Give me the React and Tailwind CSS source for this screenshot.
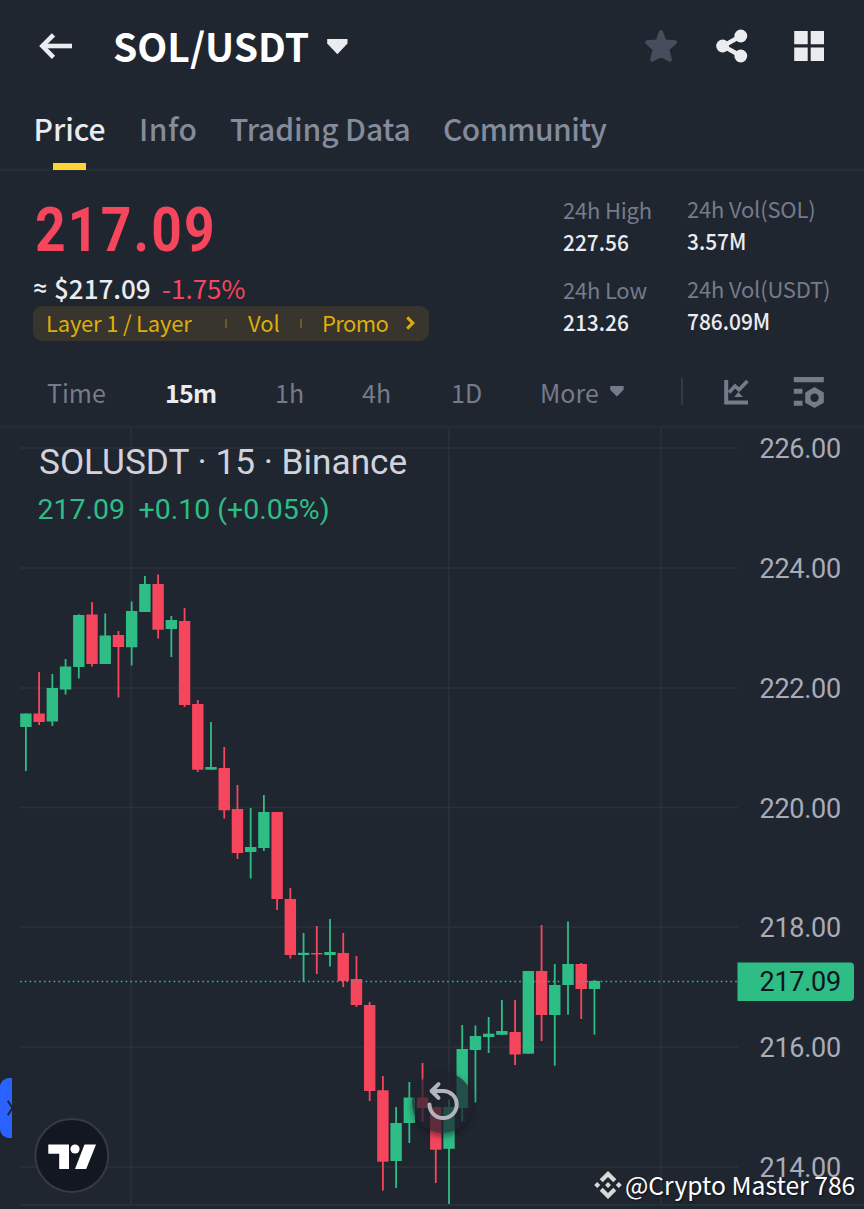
import React from "react";

const UP = "#2ebd85";
const DOWN = "#f6465d";

// [direction, wick top, body top, body bottom, wick bottom]
const candles = [
  ["u", 713.5, 713.5, 727, 771],
  ["d", 672, 713.5, 722, 725],
  ["u", 674, 688, 721.5, 726],
  ["u", 659, 666.5, 689.5, 694.5],
  ["u", 614.3, 615, 667, 678.5],
  ["d", 602, 614.5, 664, 666.5],
  ["u", 613.5, 635.5, 664, 664],
  ["d", 631, 635, 647, 697.5],
  ["u", 601.5, 611, 647.3, 665.5],
  ["u", 576, 584, 612, 612],
  ["d", 574.5, 584, 629.7, 638.5],
  ["u", 616, 620, 629, 657],
  ["d", 608, 621, 705, 707],
  ["d", 700, 704, 769.7, 772],
  ["u", 722, 767, 769.7, 769.7],
  ["d", 747, 768, 810.3, 818.5],
  ["d", 785, 809, 853, 859],
  ["u", 808, 847, 852, 878.5],
  ["u", 795, 812, 848, 851],
  ["d", 812, 812, 899, 910],
  ["d", 888, 899, 955, 958.5],
  ["u", 933, 952.8, 955, 982],
  ["d", 926, 953, 954.4, 974],
  ["u", 919, 952, 955, 966.5],
  ["d", 933, 953, 981, 987],
  ["d", 956, 979, 1005, 1007],
  ["d", 1002, 1005, 1091, 1101],
  ["d", 1076, 1090.3, 1161.7, 1190.5],
  ["u", 1107, 1123, 1161, 1188],
  ["u", 1082, 1097.5, 1123, 1143],
  ["d", 1063, 1097.5, 1108, 1121.5],
  ["d", 1107, 1107, 1149.7, 1183],
  ["u", 1099.5, 1107, 1148.8, 1204],
  ["u", 1025, 1049, 1108, 1121.5],
  ["u", 1025.5, 1036, 1050, 1102.5],
  ["u", 1017, 1033.7, 1037, 1053],
  ["u", 1000, 1031, 1034.8, 1034.8],
  ["d", 1000, 1032, 1054.5, 1065],
  ["u", 971, 971, 1053.7, 1053.7],
  ["d", 925, 971, 1015, 1041],
  ["u", 964, 985, 1015, 1065.7],
  ["u", 921.5, 964, 985, 1014.7],
  ["d", 963, 964, 989, 1019],
  ["u", 980, 981, 989, 1034.7],
];

const levels = [
  ["226.00", 448],
  ["224.00", 568],
  ["222.00", 688],
  ["220.00", 807.5],
  ["218.00", 927],
  ["216.00", 1047],
  ["214.00", 1167],
];

function Header() {
  return (
    <header className="flex h-[95px] items-center pb-[3px] pl-[39px] pr-[39px] text-[#eaecef]">
      <svg className="h-[28px] w-[34px] shrink-0" viewBox="0 0 34 28" fill="none" stroke="currentColor" strokeWidth="4.6">
        <path d="M33 14H4" />
        <path d="M14.5 2.8L3.4 14l11.1 11.3" />
      </svg>
      <h1 className="ml-[40px] w-[214px] shrink-0 whitespace-nowrap pb-[2px] font-['Noto_Sans_CJK_SC',sans-serif] text-[39px] font-bold leading-[60px] text-white">
        SOL/USDT
      </h1>
      <svg className="mt-[1px] h-[16px] w-[21px] shrink-0" viewBox="0 0 21 16" fill="currentColor">
        <path d="M.2 0h20.3v4.5L10.4 15.3.2 4.500z" />
      </svg>
      <div className="ml-auto flex items-center">
        <svg className="h-[36px] w-[34px]" viewBox="0 0 34 36" fill="#474d5c" stroke="#474d5c" strokeWidth="4" strokeLinejoin="round">
          <path d="M17 4l3.7 9.6 10.2.7-7.6 7.1 2.6 10.3L17 27l-8.900 4.700 2.600-10.300-7.600-7.100 10.200-.7z" />
        </svg>
        <svg className="ml-[38px] h-[36px] w-[32px]" viewBox="0 0 32 36" fill="currentColor">
          <path d="M25 8L7 18l18 10" fill="none" stroke="currentColor" strokeWidth="4.4" />
          <circle cx="24.8" cy="8" r="6.4" />
          <circle cx="6.600" cy="18" r="6.4" />
          <circle cx="24.8" cy="28" r="6.4" />
        </svg>
        <svg className="ml-[46px] h-[30px] w-[31px]" viewBox="0 0 31 30" fill="currentColor">
          <path d="M.2 0h13.5v13.300H.2zM16.700 0h13.300v13.300H16.700zM.2 16.500h13.500V30H.2zM16.700 16.500h13.300V30H16.700z" />
        </svg>
      </div>
    </header>
  );
}

function Tabs() {
  return (
    <nav className="grid h-[76px] grid-cols-[104px_91px_213px_1fr] items-start border-b-2 border-[#272d37] pl-[35px] pt-[11px] font-['Noto_Sans_CJK_SC',sans-serif] text-[30px] leading-[44px] text-[#848b9b]">
      <div className="flex w-[69px] flex-col items-center whitespace-nowrap font-medium text-[#eaecef]">
        Price
        <span className="mt-[13px] h-[7px] w-[33px] bg-[#fcd535]" />
      </div>
      <span className="whitespace-nowrap font-medium tracking-[0.5px]">Info</span>
      <span className="whitespace-nowrap font-medium tracking-[-0.1px]">Trading Data</span>
      <span className="whitespace-nowrap font-medium tracking-[-0.6px]">Community</span>
    </nav>
  );
}

function Stat({ label, value }) {
  return (
    <div className="flex h-[80px] flex-col whitespace-nowrap">
      <span className="text-[22px] leading-[31px] tracking-[-0.2px] text-[#757b89]">{label}</span>
      <span className="w-fit origin-left scale-x-[0.93] text-[22.5px] font-medium leading-[32px] text-[#eaecef]">{value}</span>
    </div>
  );
}

function Summary() {
  return (
    <section className="flex h-[189px] pl-[33px] font-['Noto_Sans_CJK_SC',sans-serif]">
      <div className="w-[530px]">
        <div className="ml-[2px] mt-[27px] h-[64px] w-fit origin-left scale-x-[0.86] whitespace-nowrap font-['Roboto',sans-serif] text-[62px] font-bold leading-[64px] tracking-[2.6px] text-[#f6465d]">
          217.09
        </div>
        <div className="mt-[11px] flex h-[32px] items-center whitespace-nowrap pb-[2px] text-[26px] leading-[30px]">
          <span className="w-[21px] text-[25px] font-medium text-[#eaecef] [font-family:'Roboto',sans-serif]">≈</span>
          <span className="w-[108px] font-medium text-[#eaecef]">$217.09</span>
          <span className="text-[#f6465d]">-1.75%</span>
        </div>
        <div className="mt-[1px] flex h-[35px] w-[396px] items-center rounded-[9px] bg-[#37352e] pl-[13px] text-[22px] leading-[33px] text-[#dfad0a]">
          <span className="w-[179px] whitespace-nowrap pb-[3px] tracking-[-0.2px]">Layer 1 / Layer</span>
          <span className="h-[9px] w-[2px] bg-[#6b5a21]" />
          <span className="ml-[21px] w-[52px] pb-[3px]">Vol</span>
          <span className="h-[9px] w-[2px] bg-[#6b5a21]" />
          <span className="ml-[20px] w-[84px] pb-[3px] tracking-[-0.6px]">Promo</span>
          <svg className="mb-[2px] h-[14px] w-[9px]" viewBox="0 0 9 14" fill="none" stroke="currentColor" strokeWidth="3">
            <path d="M1.200 1.400L6.800 7l-5.600 5.600" />
          </svg>
        </div>
      </div>
      <div className="mt-[23px] w-[124px]">
        <Stat label="24h High" value="227.56" />
        <Stat label="24h Low" value="213.26" />
      </div>
      <div className="mt-[22px]">
        <Stat label="24h Vol(SOL)" value="3.57M" />
        <Stat label="24h Vol(USDT)" value="786.09M" />
      </div>
    </section>
  );
}

function Intervals() {
  return (
    <div className="flex h-[68px] items-center border-b-[3px] border-[#252b34] pb-[2px] pl-[47px] font-['Noto_Sans_CJK_SC',sans-serif] text-[25px] leading-[40px] text-[#757b89]">
      <span className="w-[118px]">Time</span>
      <span className="w-[110px] font-bold tracking-[-0.8px] text-[#eaecef]">15m</span>
      <span className="w-[87px]">1h</span>
      <span className="w-[89px]">4h</span>
      <span className="w-[89px]">1D</span>
      <span className="w-[70px]">More</span>
      <svg className="h-[11px] w-[14px]" viewBox="0 0 14 11" fill="currentColor">
        <path d="M.2 0h13.400v3.800L6.900 10.600.2 3.800z" />
      </svg>
      <span className="ml-[57px] h-[27px] w-[2px] bg-[#343a45]" />
      <svg className="ml-[41px] h-[26px] w-[25px]" viewBox="0 0 25 26" fill="none" stroke="currentColor" strokeWidth="4">
        <path d="M2.200 1v22.400H24" />
        <path d="M5 13.500l6-6.500 4 3.800L23.400 2" strokeWidth="3.600" />
        <path d="M14.300 13l4.600 5h-8.700z" fill="currentColor" stroke="none" />
      </svg>
      <svg className="ml-[44px] h-[32px] w-[32px]" viewBox="0 0 32 32" fill="currentColor">
        <path d="M.8 1h30v5.200H.8zM.8 12.700h8.700v5H.8zM.8 24.800h8.700v5H.8z" />
        <path fillRule="evenodd" d="M21.500 11.100l9.300 5.300v10.300l-9.300 5.300-9.300-5.300V16.400zM21.500 17.500a4.200 4.200 0 1 0 0 8.400 4.200 4.200 0 0 0 0-8.400z" />
      </svg>
    </div>
  );
}

function Chart() {
  return (
    <section className="relative h-[781px] overflow-hidden font-['Roboto',sans-serif]">
      <svg className="block h-[781px] w-[864px]" viewBox="0 428 864 781">
        <g stroke="#2b313a" strokeWidth="1.600">
          {levels.map(([label, y]) => (
            <line key={label} x1="20" x2="738" y1={y} y2={y} />
          ))}
          {[131, 449, 661].map((x) => (
            <line key={x} x1={x} x2={x} y1="428" y2="1204" />
          ))}
          <line x1="20" x2="864" y1="1204.800" y2="1204.800" />
        </g>
        {candles.map(([dir, wt, bt, bb, wb], i) => {
          const x = 25.9 + i * 13.222;
          return (
            <g key={i} fill={dir === "u" ? UP : DOWN}>
              <rect x={x - 0.9} y={wt} width="1.800" height={wb - wt} />
              <rect x={x - 5.7} y={bt} width="11.400" height={bb - bt} />
            </g>
          );
        })}
        <line x1="20" x2="738" y1="981.500" y2="981.500" stroke={UP} strokeWidth="1.500" strokeDasharray="1.600 3.200" />
        <g fontSize="27" letterSpacing="-0.300" fill="#a9acb8">
          {levels.map(([label, y]) => (
            <text key={label} x="759.600" y={Math.round(y + 10.2)}>{label}</text>
          ))}
        </g>
        <path d="M737.500 962.500H850a4 4 0 0 1 4 4V997a4 4 0 0 1-4 4H737.500z" fill={UP} />
        <text x="759.600" y="991" fontSize="27" letterSpacing="-0.300" fill="#10141c">217.09</text>
      </svg>

      <div className="absolute left-[39px] top-[13px] whitespace-nowrap text-[35.200px] leading-[42px] text-[#d0d3dc]">
        SOLUSDT · 15 · Binance
      </div>
      <div className="absolute left-[37.500px] top-[66px] flex whitespace-nowrap text-[28.500px] leading-[32px] text-[#2ebd85]">
        <span className="w-[101px]">217.09</span>
        <span>+0.10 (+0.05%)</span>
      </div>

      <div className="absolute left-0 top-[650px] flex h-[60px] w-[11.500px] items-center overflow-hidden rounded-l-[9px] bg-[#2962ff]">
        <svg className="ml-[7px] h-[16px] w-[9px] shrink-0" viewBox="0 0 9 16" fill="none" stroke="#1b2230" strokeWidth="2">
          <path d="M.8.8L5.500 8 .8 15.200" />
        </svg>
      </div>

      <svg className="absolute left-[34px] top-[690px] h-[76px] w-[76px]" viewBox="0 0 76 76">
        <circle cx="37.800" cy="37.500" r="36.400" fill="#131722" stroke="#363a45" strokeWidth="2" />
        <path d="M14.300 26.500H35v24.500h-9.800V35.800H14.300z" fill="#fff" />
        <circle cx="41" cy="31" r="4.600" fill="#fff" />
        <path d="M50.500 26.500H62L52.200 51H41z" fill="#fff" />
      </svg>

      <div className="absolute left-[412px] top-[644px] flex h-[61px] w-[61px] items-center justify-center rounded-full bg-[#1e222d]/70 pb-[4px] shadow-[0_3px_6px_rgba(10,14,20,0.500)]">
        <svg className="h-[40px] w-[32px]" viewBox="0 0 32 40" fill="none" stroke="#b2b5be" strokeWidth="4" strokeLinecap="round" strokeLinejoin="round">
          <path d="M2.500 23.500A13.600 13.600 0 1 0 16.100 9.900H5" />
          <path d="M11.500 3.200L4.600 10l6.900 6.800" />
        </svg>
      </div>

      <div className="absolute left-[594px] top-[739px] flex items-center whitespace-nowrap font-['Noto_Sans_CJK_SC',sans-serif] text-[24.700px] leading-[34px] text-white">
        <svg className="mr-[3px] mt-[1px] h-[28px] w-[28px]" viewBox="0 0 28 28" fill="#d9d9d9">
          <path d="M14 0l8.300 8.300-3 3L14 6l-5.300 5.300-3-3z" />
          <path d="M14 28l8.300-8.300-3-3L14 22l-5.300-5.300-3 3z" />
          <path d="M14 11l3 3-3 3-3-3zM3.200 11l3 3-3 3-3-3zM24.800 11l3 3-3 3-3-3z" />
        </svg>
        <span className="[text-shadow:1px_1px_2px_rgba(0,0,0,0.6)]">@Crypto Master 786</span>
      </div>
    </section>
  );
}

export default function App() {
  return (
    <main className="h-[1209px] w-[864px] overflow-hidden bg-[#202630]">
      <Header />
      <Tabs />
      <Summary />
      <Intervals />
      <Chart />
    </main>
  );
}
